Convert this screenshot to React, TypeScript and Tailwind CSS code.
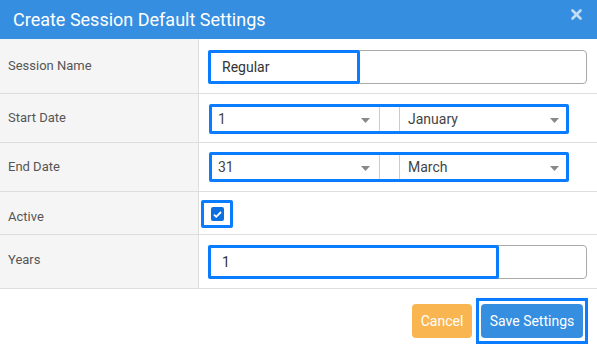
import React from "react";

const labelCell =
  "flex w-[199px] shrink-0 items-center border-r border-[#dddddd] bg-[#f5f5f5] pl-2 text-[13px] text-[#555555]";

function Caret() {
  return (
    <svg width="9" height="5" viewBox="0 0 9 5" className="absolute right-[9px] top-[12px]">
      <path d="M0 0h9L4.5 5z" fill="#888888" />
    </svg>
  );
}

function SelectBox({ value, className }: { value: string; className: string }) {
  return (
    <div
      className={`relative flex h-[28px] items-center rounded-[3px] border border-[#cccccc] bg-white pl-[8px] text-[14px] text-[#444444] ${className}`}
    >
      {value}
      <Caret />
    </div>
  );
}

export default function App() {
  return (
    <div className="h-[350px] w-[597px] overflow-hidden bg-white font-['Roboto',sans-serif]">
      <div className="relative flex h-[39px] items-center bg-[#368ee0] pl-[13px] text-[18px] text-white">
        Create Session Default Settings
        <svg width="11" height="11" viewBox="0 0 11 11" className="absolute right-[15px] top-[9px] opacity-70">
          <path d="M1.5 1.5l8 8M9.5 1.5l-8 8" stroke="white" strokeWidth="2.6" strokeLinecap="round" />
        </svg>
      </div>

      <div className="flex h-[55px] border-b border-[#dddddd]">
        <div className={labelCell}>Session Name</div>
        <div className="flex flex-1 items-start pl-[9px] pt-[11px] pr-[10px]">
          <div className="relative h-[34px] w-full rounded-[4px] border border-[#aaaaaa] bg-white">
            <div className="absolute -left-px -top-px flex h-[34px] w-[152px] items-center rounded-[2px] border-[3px] border-[#0a7cff] pl-[11px] text-[14px] text-[#333333]">
              Regular
            </div>
          </div>
        </div>
      </div>

      <div className="flex h-[49px] border-b border-[#dddddd]">
        <div className={labelCell}>Start Date</div>
        <div className="flex flex-1 items-start pl-[10px] pt-[10px]">
          <div className="relative flex h-[30px] w-[360px] items-center">
            <SelectBox value="1" className="w-[171px]" />
            <div className="w-[19px]" />
            <SelectBox value="January" className="w-[170px]" />
            <div className="absolute inset-0 rounded-[2px] border-[3px] border-[#0a7cff]" />
          </div>
        </div>
      </div>

      <div className="flex h-[49px] border-b border-[#dddddd]">
        <div className={labelCell}>End Date</div>
        <div className="flex flex-1 items-start pl-[10px] pt-[9px]">
          <div className="relative flex h-[30px] w-[360px] items-center">
            <SelectBox value="31" className="w-[171px]" />
            <div className="w-[19px]" />
            <SelectBox value="March" className="w-[170px]" />
            <div className="absolute inset-0 rounded-[2px] border-[3px] border-[#0a7cff]" />
          </div>
        </div>
      </div>

      <div className="flex h-[43px] border-b border-[#dddddd]">
        <div className={`${labelCell} !items-start pt-[15px]`}>Active</div>
        <div className="flex flex-1 items-start pl-[2px] pt-[8px]">
          <div className="flex h-[28px] w-[32px] items-center justify-center rounded-[2px] border-[3px] border-[#0a7cff]">
            <div className="flex h-[14px] w-[13px] items-center justify-center rounded-[2px] bg-[#0b6fe0]">
              <svg width="9" height="7" viewBox="0 0 9 7">
                <path d="M1 3.6l2.2 2.2L8 1" fill="none" stroke="white" strokeWidth="1.8" />
              </svg>
            </div>
          </div>
        </div>
      </div>

      <div className="flex h-[54px] border-b border-[#dddddd]">
        <div className={`${labelCell} !items-start pt-[15px]`}>Years</div>
        <div className="flex flex-1 items-start pl-[9px] pt-[10px] pr-[10px]">
          <div className="relative h-[34px] w-full rounded-[4px] border border-[#aaaaaa] bg-white">
            <div className="absolute -left-px -top-px flex h-[34px] w-[291px] items-center rounded-[2px] border-[3px] border-[#0a7cff] pl-[11px] text-[14px] text-[#333333]">
              1
            </div>
          </div>
        </div>
      </div>

      <div className="flex justify-end gap-[9px] pr-[14px] pt-[15px]">
        <button className="h-[34px] w-[60px] rounded-[4px] bg-[#f9b54f] text-[14px] text-white">Cancel</button>
        <div className="relative">
          <button className="h-[34px] w-[102px] rounded-[4px] bg-[#368ee0] text-[14px] text-white">
            Save Settings
          </button>
          <div className="absolute -left-[5px] -right-[5px] -top-[6px] -bottom-[6px] border-[3px] border-[#0a7cff]" />
        </div>
      </div>
    </div>
  );
}
